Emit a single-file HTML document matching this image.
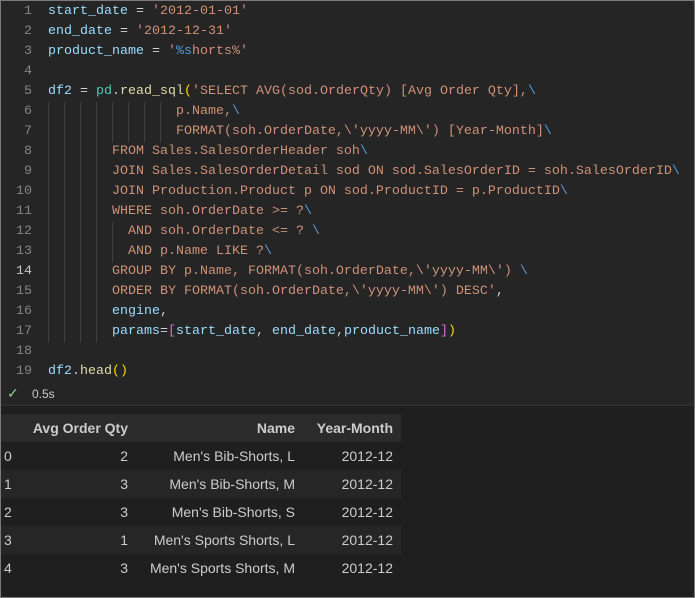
<!DOCTYPE html>
<html><head><meta charset="utf-8"><style>
html,body{margin:0;padding:0;background:#1e1e1e;}
#root{position:relative;width:693px;height:596px;border:1px solid #7a7a7a;background:#1f1f1f;overflow:hidden;}
.cell{position:absolute;left:0;top:0;width:693px;height:403px;background:#252526;}
.ln{position:absolute;left:0;top:1px;width:31px;text-align:right;font:13.33px "Liberation Mono",monospace;color:#858585;line-height:20px;}
.code{position:absolute;left:47px;top:1px;font:13.33px "Liberation Mono",monospace;color:#ce9178;line-height:20px;white-space:pre;}
.v{color:#9cdcfe}.w{color:#d4d4d4}.b{color:#569cd6}.t{color:#4ec9b0}.f{color:#dcdcaa}.y{color:#ffd700}.m{color:#da70d6}
.g{position:absolute;width:1px;background:#404040;}
.sep{position:absolute;left:0;top:403px;width:693px;height:2px;background:#2d2d2d;}
table{position:absolute;left:0;top:413px;border-collapse:collapse;table-layout:fixed;width:400px;font:14px "Liberation Sans",sans-serif;color:#cccccc;}
td,th{height:28px;padding:0 8px 0 0;text-align:right;white-space:nowrap;}
th{background:#2b2b2b;font-weight:bold;}
tr.s td{background:#262626;}
td:first-child,th:first-child{text-align:left;padding-left:3px;}
</style></head><body><div id="root">
<div class="cell"></div>
<div class="ln">1<br>2<br>3<br>4<br>5<br>6<br>7<br>8<br>9<br>10<br>11<br>12<br>13<br><span style="color:#c6c6c6">14</span><br>15<br>16<br>17<br>18<br>19</div>
<div class="g" style="left:47px;top:101px;height:240px"></div>
<div class="g" style="left:63px;top:101px;height:240px"></div>
<div class="g" style="left:79px;top:101px;height:240px"></div>
<div class="g" style="left:95px;top:101px;height:240px"></div>
<div class="g" style="left:111px;top:101px;height:40px"></div>
<div class="g" style="left:127px;top:101px;height:40px"></div>
<div class="g" style="left:143px;top:101px;height:40px"></div>
<div class="g" style="left:159px;top:101px;height:40px"></div>
<div class="g" style="left:111px;top:221px;height:40px"></div>
<div class="code"><span class="v">start_date</span><span class="w"> = </span>'2012-01-01'
<span class="v">end_date</span><span class="w"> = </span>'2012-12-31'
<span class="v">product_name</span><span class="w"> = </span>'<span class="b">%s</span>horts%'

<span class="v">df2</span><span class="w"> = </span><span class="t">pd</span><span class="w">.</span><span class="f">read_sql</span><span class="y">(</span>'SELECT AVG(sod.OrderQty) [Avg Order Qty],<span class="b">\</span>
                p.Name,<span class="b">\</span>
                FORMAT(soh.OrderDate,\'yyyy-MM\') [Year-Month]<span class="b">\</span>
        FROM Sales.SalesOrderHeader soh<span class="b">\</span>
        JOIN Sales.SalesOrderDetail sod ON sod.SalesOrderID = soh.SalesOrderID<span class="b">\</span>
        JOIN Production.Product p ON sod.ProductID = p.ProductID<span class="b">\</span>
        WHERE soh.OrderDate &gt;= ?<span class="b">\</span>
          AND soh.OrderDate &lt;= ? <span class="b">\</span>
          AND p.Name LIKE ?<span class="b">\</span>
        GROUP BY p.Name, FORMAT(soh.OrderDate,\'yyyy-MM\') <span class="b">\</span>
        ORDER BY FORMAT(soh.OrderDate,\'yyyy-MM\') DESC'<span class="w">,</span>
        <span class="v">engine</span><span class="w">,</span>
        <span class="v">params</span><span class="w">=</span><span class="m">[</span><span class="v">start_date</span><span class="w">, </span><span class="v">end_date</span><span class="w">,</span><span class="v">product_name</span><span class="m">]</span><span class="y">)</span>

<span class="v">df2</span><span class="w">.</span><span class="f">head</span><span class="y">()</span></div>
<div style="position:absolute;left:6px;top:384px;font:14px 'Liberation Sans',sans-serif;color:#89d185">✓</div>
<div style="position:absolute;left:31px;top:386px;font:12px 'Liberation Sans',sans-serif;color:#cccccc">0.5s</div>
<div class="sep"></div>
<table>
<colgroup><col style="width:20px"><col style="width:115px"><col style="width:167px"><col style="width:98px"></colgroup>
<tr><th></th><th>Avg Order Qty</th><th>Name</th><th>Year-Month</th></tr>
<tr><td>0</td><td>2</td><td>Men's Bib-Shorts, L</td><td>2012-12</td></tr>
<tr class="s"><td>1</td><td>3</td><td>Men's Bib-Shorts, M</td><td>2012-12</td></tr>
<tr><td>2</td><td>3</td><td>Men's Bib-Shorts, S</td><td>2012-12</td></tr>
<tr class="s"><td>3</td><td>1</td><td>Men's Sports Shorts, L</td><td>2012-12</td></tr>
<tr><td>4</td><td>3</td><td>Men's Sports Shorts, M</td><td>2012-12</td></tr>
</table>
</div></body></html>
